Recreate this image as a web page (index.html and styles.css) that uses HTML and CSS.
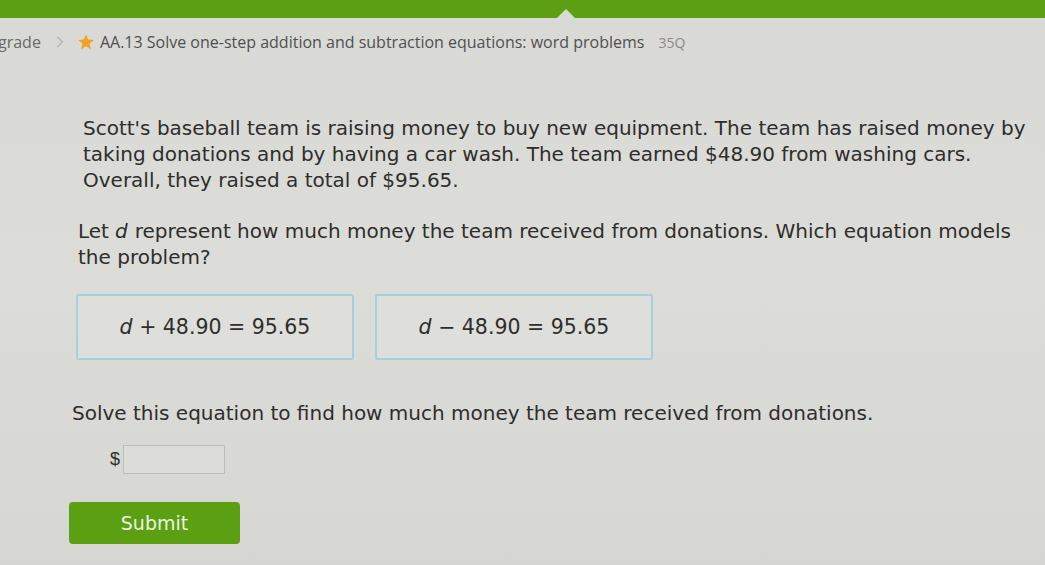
FILE: index.html
```html
<!DOCTYPE html>
<html>
<head>
<meta charset="utf-8">
<link rel="stylesheet" href="styles.css">
</head>
<body>
<div class="topbar"><span class="notch"></span></div>
<nav class="crumbs">
  <span class="crumb">grade</span>
  <svg class="chev" width="8" height="12" viewBox="0 0 8 12"><path d="M1.5 1 L6.5 6 L1.5 11" fill="none" stroke="#b5b5b2" stroke-width="1.3"/></svg>
  <svg class="star" width="18" height="18" viewBox="0 0 24 24"><path d="M12 1.5 L14.9 8.6 L22.5 9.2 L16.7 14.1 L18.5 21.6 L12 17.6 L5.5 21.6 L7.3 14.1 L1.5 9.2 L9.1 8.6 Z" fill="#eea424"/></svg>
  <span class="skill">AA.13 Solve one-step addition and subtraction equations: word problems</span>
  <span class="count">35Q</span>
</nav>
<main class="content">
  <p class="para first">Scott's baseball team is raising money to buy new equipment. The team has raised money by taking donations and by having a car wash. The team earned $48.90 from washing cars. Overall, they raised a total of $95.65.</p>
  <p class="para second">Let<i class="var gap">d</i>represent how much money the team received from donations. Which equation models the problem?</p>
  <div class="choices">
    <div class="choice"><i class="var">d</i>&nbsp;+ 48.90 = 95.65</div>
    <div class="choice"><i class="var">d</i>&nbsp;− 48.90 = 95.65</div>
  </div>
  <p class="para solve">Solve this equation to find how much money the team received from donations.</p>
  <div class="answer"><span class="dollar">$</span><span class="field"></span></div>
  <button class="submit">Submit</button>
</main>
</body>
</html>
```
FILE: styles.css
```css
html, body {
  margin: 0;
  padding: 0;
}
body {
  width: 1045px;
  height: 565px;
  overflow: hidden;
  background: linear-gradient(180deg, #d9d9d5 0%, #dcdcd8 50%, #d6d6d2 100%);
  font-family: "DejaVu Sans", sans-serif;
  color: #2e2e2c;
}
.topbar {
  height: 18px;
  background: #5c9f12;
  position: relative;
}
.notch {
  position: absolute;
  left: 557px;
  bottom: 0;
  width: 0;
  height: 0;
  border-left: 9px solid transparent;
  border-right: 9px solid transparent;
  border-bottom: 9px solid #d9d9d5;
}
.crumbs {
  display: flex;
  align-items: center;
  height: 48px;
  font-family: "Open Sans", "Liberation Sans", sans-serif;
  font-size: 16px;
  color: #5c5c5a;
  margin-left: -2px;
}
.crumb { color: #6a6a68; }
.chev { margin-left: 15px; margin-right: 13px; }
.star { margin-right: 5px; }
.skill { color: #505050; }
.count { margin-left: 14px; color: #8a8a88; font-size: 14px; }
.content {
  padding-left: 80px;
  padding-top: 49px;
}
.para {
  margin: 0;
  font-family: "DejaVu Sans", sans-serif;
  font-size: 20px;
  line-height: 26px;
  width: 955px;
}
.first { margin-left: 3px; }
.second { margin-top: 25px; margin-left: -2px; }
.var { font-style: italic; }
.gap { display: inline-block; margin: 0 7px 0 6px; }
.choices {
  display: flex;
  gap: 21px;
  margin-top: 24px;
  margin-left: -4px;
}
.choice {
  width: 274px;
  height: 62px;
  border: 2px solid #a7d0de;
  border-radius: 2px;
  background: #dedfdb;
  display: flex;
  align-items: center;
  justify-content: center;
  font-size: 20.5px;
  color: #2e2e2c;
}
.solve { margin-top: 40px; margin-left: -8px; }
.answer {
  display: flex;
  align-items: center;
  margin-top: 19px;
  margin-left: 30px;
}
.dollar { font-size: 18px; margin-right: 3px; font-family: "Liberation Sans", sans-serif; }
.field {
  width: 100px;
  height: 27px;
  border: 1px solid #bdbdba;
  background: #dcdcd9;
}
.submit {
  display: block;
  margin-top: 28px;
  margin-left: -11px;
  width: 171px;
  height: 42px;
  border: none;
  border-radius: 4px;
  background: #5ba012;
  color: #eef3e0;
  font-family: "DejaVu Sans", sans-serif;
  font-size: 19px;
  padding: 0;
}
```
